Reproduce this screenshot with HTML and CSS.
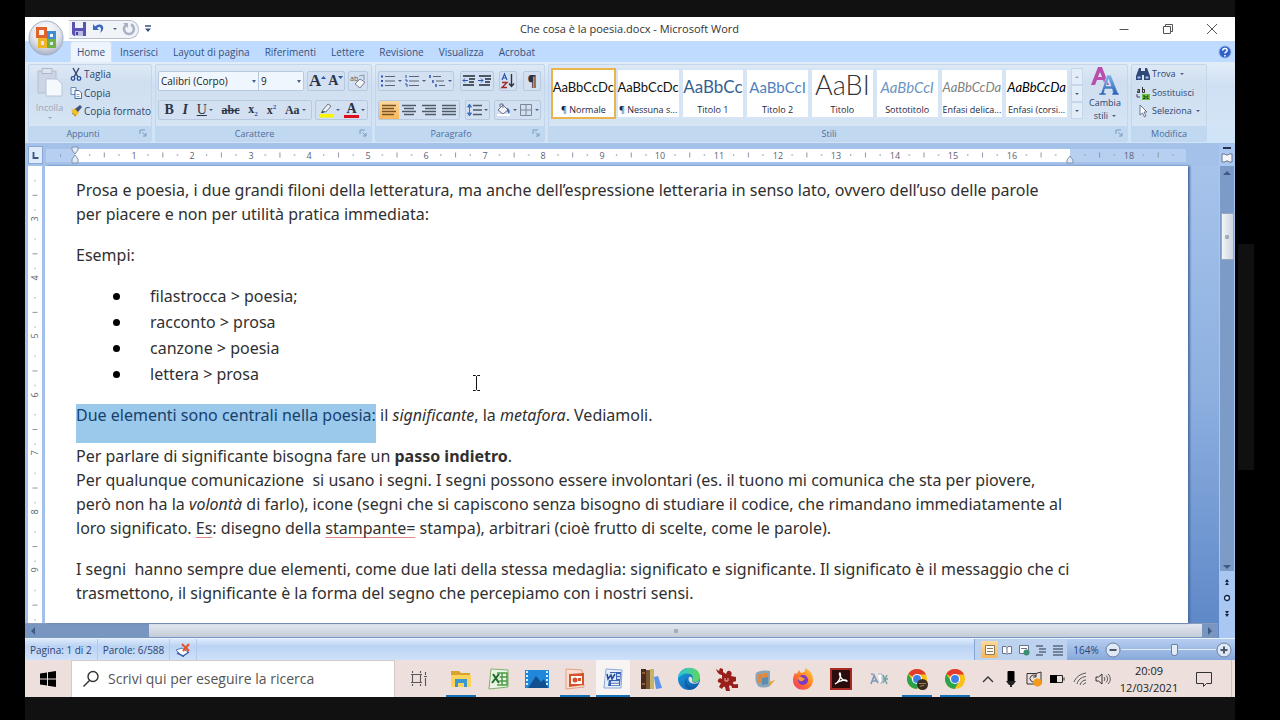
FILE: index.html
```html
<!DOCTYPE html>
<html lang="it">
<head>
<meta charset="utf-8">
<title>Che cosa è la poesia.docx - Microsoft Word</title>
<link rel="stylesheet" href="styles.css">
</head>
<body>
<svg class="defs" aria-hidden="true">
  <defs>
    <linearGradient id="gEdge" x1="0" y1="0" x2="1" y2="1"><stop offset="0" stop-color="#1b9de2"/><stop offset="1" stop-color="#0c59a4"/></linearGradient>
    <linearGradient id="gEdge2" x1="0" y1="0" x2="1" y2="0"><stop offset="0" stop-color="#2fc2df"/><stop offset="1" stop-color="#5fd75a"/></linearGradient>
    <linearGradient id="gFox" x1="0" y1="1" x2="1" y2="0"><stop offset="0" stop-color="#f0306a"/><stop offset=".5" stop-color="#ff7a26"/><stop offset="1" stop-color="#ffd43a"/></linearGradient>
    <linearGradient id="gA" x1="0" y1="0" x2="0" y2="1"><stop offset="0" stop-color="#7fb2e8"/><stop offset="1" stop-color="#2c62b4"/></linearGradient>
    <radialGradient id="gOrb" cx=".5" cy=".3" r=".7"><stop offset="0" stop-color="#fff"/><stop offset=".6" stop-color="#e0e4ec"/><stop offset="1" stop-color="#a9b2c4"/></radialGradient>
    <pattern id="ticks" width="58.55" height="12" patternUnits="userSpaceOnUse"><path d="M14.6 5v2M43.9 5v2" stroke="#9aa3b0"/><path d="M29.3 3.500v5" stroke="#8a93a2"/></pattern>
    <pattern id="vticks" width="14" height="58.55" patternUnits="userSpaceOnUse"><path d="M6 14.600h2M6 43.900h2" stroke="#b4bac4"/><path d="M4.500 29.300h5" stroke="#8a93a2"/></pattern>
    <symbol id="launch" viewBox="0 0 8 8"><path d="M1 5V1h5M3.500 3.500l3 3M7 4v3H4" fill="none" stroke="#7d96ba"/></symbol>
    <symbol id="chrome" viewBox="0 0 24 24"><circle cx="12" cy="12" r="11" fill="#fbc116"/><path d="M12 12 2.500 6.500A11 11 0 0 1 21.500 6.500L22 7H12z" fill="#e33b2e"/><path d="M2.500 6.500A11 11 0 0 0 11.500 23l5-8.500L12 12 7.500 14.500z" fill="#2ba24c"/><circle cx="12" cy="12" r="5.500" fill="#fff"/><circle cx="12" cy="12" r="4.300" fill="#3f7fe8"/></symbol>
  </defs>
</svg>
<div class="screen">
<main class="window">
  <header class="titlebar">
    <div class="quick">
      <button aria-label="Salva"><svg width="16" height="16" viewBox="0 0 16 16"><path d="M1 1h14v14H3l-2-2z" fill="#5a51b5"/><path d="M4 1h8v6H4z" fill="#eef1fb"/><path d="M4 10h8v5H4z" fill="#b9bce4"/><path d="M5 11h2v3H5z" fill="#453c98"/></svg></button>
      <button aria-label="Annulla"><svg width="14" height="14" viewBox="0 0 14 14"><path d="M1 2v6h6L5 6c3-2.500 5.500.5 3 5 5-3 4-9-1-8.500C5.500 2.600 4 3.500 3 4.500z" fill="#3c68c0"/></svg></button>
      <i class="caret"></i>
      <button aria-label="Ripeti"><svg width="14" height="14" viewBox="0 0 14 14"><path d="M9 2.500A5 5 0 1 1 4 3" fill="none" stroke="#a8b2c4" stroke-width="2.500"/><path d="M1 1h5v5z" fill="#a8b2c4"/></svg></button>
    </div>
    <button class="more" aria-label="Personalizza barra"><svg width="8" height="8" viewBox="0 0 8 8"><path d="M1 1h6" stroke="#354f80" stroke-width="1.500"/><path d="M1 3.500h6L4 7z" fill="#354f80"/></svg></button>
    <h1>Che cosa è la poesia.docx - Microsoft Word</h1>
    <div class="winbtns">
      <button aria-label="Riduci"><svg width="12" height="12" viewBox="0 0 12 12"><path d="M1.500 6.500h9" stroke="#555"/></svg></button>
      <button aria-label="Ripristina"><svg width="12" height="12" viewBox="0 0 12 12"><path d="M1.500 3.500h7v7h-7zM3.500 3.500v-2h7v7h-2" fill="none" stroke="#555"/></svg></button>
      <button aria-label="Chiudi"><svg width="12" height="12" viewBox="0 0 12 12"><path d="M1 1l10 10M11 1 1 11" stroke="#555"/></svg></button>
    </div>
  </header>
  <button class="orb" aria-label="Pulsante Office"><svg width="36" height="36" viewBox="0 0 36 36"><circle cx="18" cy="18" r="17" fill="url(#gOrb)" stroke="#a3aec4"/><g fill="none" stroke-width="3"><path d="M9.500 8.500h8v8h-8z" stroke="#e2622e"/><path d="M20.500 12.500h6v6h-6z" stroke="#3c8fd2"/><path d="M11.500 19.500h6v7h-6z" stroke="#f0b429"/><path d="M20.500 20.500h6v6h-6z" stroke="#6eb246"/></g></svg></button>
  <nav class="tabs">
    <button class="on">Home</button><button>Inserisci</button><button>Layout di pagina</button><button>Riferimenti</button><button>Lettere</button><button>Revisione</button><button>Visualizza</button><button>Acrobat</button>
    <button class="help" aria-label="Guida"><svg width="14" height="14" viewBox="0 0 14 14"><circle cx="7" cy="7" r="6" fill="#2f62c4" stroke="#8fb0e6"/><path d="M4.500 5.500C5 2.500 10 3 9 6c-.5 1-2 1-2 2.500M7 10v1.500" fill="none" stroke="#fff" stroke-width="1.600"/></svg></button>
  </nav>

  <section class="ribbon">
    <div class="group appunti">
      <div class="body">
        <button class="paste"><svg width="28" height="32" viewBox="0 0 28 32"><path d="M2 4h18v22H2z" fill="#cbd5e4" stroke="#b3c0d4"/><path d="M6 1.500h10v5H6z" fill="#dde4ee" stroke="#aab8cc"/><path d="M10 12h11l5 5v12H10z" fill="#f5f8fc" stroke="#b7c4d8"/></svg><span>Incolla</span><i class="caret pale"></i></button>
        <div class="stack">
          <button><svg width="12" height="14" viewBox="0 0 12 14"><path d="M3 1l5 9M9 1 4 10" stroke="#3b4a72" stroke-width="1.500"/><circle cx="3" cy="11.500" r="1.800" fill="none" stroke="#2d4fa0" stroke-width="1.300"/><circle cx="9" cy="11.500" r="1.800" fill="none" stroke="#2d4fa0" stroke-width="1.300"/></svg>Taglia</button>
          <button><svg width="12" height="14" viewBox="0 0 12 14"><path d="M1 1.500h5v7H1z" fill="#eef4fc" stroke="#6d8cbd"/><path d="M5 4.500h4l2.500 2.500v5.500H5z" fill="#fff" stroke="#3f68a8"/><path d="M6.500 8.500h3M6.500 10.500h3" stroke="#7fa0d0"/></svg>Copia</button>
          <button><svg width="12" height="14" viewBox="0 0 12 14"><path d="M1 6l5-2 3 5-4 4z" fill="#f0c22e"/><path d="M5 5l5-4 2 2-4 5z" fill="#46517c"/><path d="M2 9l4 3" stroke="#a8791a"/></svg>Copia formato</button>
        </div>
      </div>
      <footer>Appunti<svg width="8" height="8"><use href="#launch"/></svg></footer>
    </div>

    <div class="group carattere">
      <div class="body rows">
        <div class="row">
          <div class="joined"><select class="font" aria-label="Tipo di carattere"><option>Calibri (Corpo)</option></select><select class="size" aria-label="Dimensione carattere"><option>9</option></select></div>
          <div class="box grow"><button class="serif big" aria-label="Aumenta carattere">A<svg width="5" height="10" viewBox="0 0 5 10"><path d="M0 3h5L2.500 0z" fill="#2d56ae"/></svg></button><button class="serif" aria-label="Riduci carattere">A<svg width="5" height="10" viewBox="0 0 5 10"><path d="M0 0h5L2.500 3z" fill="#2d56ae"/></svg></button></div>
          <div class="box"><button aria-label="Cancella formattazione"><svg width="16" height="16" viewBox="0 0 16 16"><text x="0" y="8" font-size="7" fill="#555">ab</text><path d="M5 11l5-5 5 3-5 6z" fill="#f5f5f8" stroke="#777f92"/><path d="M9 3l5-1v5" fill="none" stroke="#8a93a6"/></svg></button></div>
        </div>
        <div class="row">
          <div class="box fmt">
            <button class="serif" aria-label="Grassetto">B</button>
            <button class="serif" aria-label="Corsivo"><em>I</em></button>
            <button class="serif thin" aria-label="Sottolineato"><ins>U</ins><i class="caret"></i></button>
            <button class="serif small" aria-label="Barrato"><s>abc</s></button>
            <button class="serif small" aria-label="Pedice"><span>x<sub>2</sub></span></button>
            <button class="serif small" aria-label="Apice"><span>x<sup>2</sup></span></button>
            <button class="serif small" aria-label="Maiuscole/minuscole">Aa<i class="caret"></i></button>
          </div>
          <div class="box colors">
            <button aria-label="Evidenziatore"><svg width="16" height="16" viewBox="0 0 16 16"><path d="M4 9l6-7 3 2-5 6z" fill="#eef0f2" stroke="#6f7887"/><path d="M3 11l1-2 3 1-2 1z" fill="#444"/><path d="M1 12h14v3.500H1z" fill="#fbf400"/></svg><i class="caret"></i></button>
            <button class="fc" aria-label="Colore carattere"><span>A</span><i class="caret"></i></button>
          </div>
        </div>
      </div>
      <footer>Carattere<svg width="8" height="8"><use href="#launch"/></svg></footer>
    </div>

    <div class="group paragrafo">
      <div class="body rows">
        <div class="row">
          <div class="box">
            <button aria-label="Elenco puntato"><svg width="16" height="14" viewBox="0 0 16 14"><path d="M5 2.500h10M5 7h10M5 11.500h10" stroke="#5b6675"/><path d="M1 2.500h2M1 7h2M1 11.500h2" stroke="#2d56ae" stroke-width="2"/></svg><i class="caret"></i></button>
            <button aria-label="Elenco numerato"><svg width="16" height="14" viewBox="0 0 16 14"><path d="M5 2.500h10M5 7h10M5 11.500h10" stroke="#5b6675"/><path d="M2 1v3M1 6h2v2M1 10h2v3" stroke="#2d56ae" fill="none"/></svg><i class="caret"></i></button>
            <button aria-label="Elenco a più livelli"><svg width="18" height="14" viewBox="0 0 18 14"><path d="M5 2.500h8M8 7h8M11 11.500h6" stroke="#5b6675"/><path d="M2 1v3M5 6v3M8 10v3" stroke="#2d56ae" stroke-width="1.500"/></svg><i class="caret"></i></button>
          </div>
          <div class="box">
            <button aria-label="Riduci rientro"><svg width="14" height="14" viewBox="0 0 14 14"><path d="M1 2h12M7 5h6M7 8h5M1 11h11" stroke="#222b3a" stroke-width="1.600"/><path d="M6 6.500H1M3 4.500l-2 2 2 2" stroke="#2d56ae" fill="none"/></svg></button>
            <button aria-label="Aumenta rientro"><svg width="14" height="14" viewBox="0 0 14 14"><path d="M1 2h12M7 5h6M7 8h5M1 11h11" stroke="#222b3a" stroke-width="1.600"/><path d="M0 6.500h5M3 4.500l2 2-2 2" stroke="#2d56ae" fill="none"/></svg></button>
          </div>
          <div class="box"><button aria-label="Ordina"><svg width="14" height="16" viewBox="0 0 14 16"><path d="M1 7l2.500-6L6 7M2 5h3" fill="none" stroke="#2d56ae" stroke-width="1.200"/><path d="M1 9.500h5l-5 5h5" fill="none" stroke="#a02828" stroke-width="1.400"/><path d="M10.500 1v12M8 10.500l2.500 3 2.500-3" fill="none" stroke="#333" stroke-width="1.400"/></svg></button></div>
          <div class="box"><button class="pilcrow" aria-label="Mostra tutto">¶</button></div>
        </div>
        <div class="row">
          <div class="box">
            <button class="lit" aria-label="Allinea a sinistra"><svg width="14" height="12" viewBox="0 0 14 12"><path d="M0 1.500h14M0 4.500h12M0 7.500h14M0 10.500h12" stroke="#7a5222" stroke-width="1.500"/></svg></button>
            <button class="al" aria-label="Centra"><svg width="14" height="12" viewBox="0 0 14 12"><path d="M0 1.500h14M2 4.500h10M0 7.500h14M2 10.500h10" stroke="#4f5a68" stroke-width="1.500"/></svg></button>
            <button class="al" aria-label="Allinea a destra"><svg width="14" height="12" viewBox="0 0 14 12"><path d="M0 1.500h14M3 4.500h11M0 7.500h14M3 10.500h11" stroke="#4f5a68" stroke-width="1.500"/></svg></button>
            <button class="al" aria-label="Giustifica"><svg width="14" height="12" viewBox="0 0 14 12"><path d="M0 1.500h14M0 4.500h14M0 7.500h14M0 10.500h14" stroke="#4f5a68" stroke-width="1.500"/></svg></button>
          </div>
          <div class="box"><button aria-label="Interlinea"><svg width="15" height="14" viewBox="0 0 15 14"><path d="M6 2.500h9M6 7h9M6 11.500h9" stroke="#4f5a68" stroke-width="1.300"/><path d="M2.500 2v10M.5 4l2-3 2 3zM.5 10l2 3 2-3z" stroke="#3f72bd" fill="#3f72bd"/></svg><i class="caret"></i></button></div>
          <div class="box fills">
            <button aria-label="Sfondo"><svg width="15" height="14" viewBox="0 0 15 14"><path d="M2 7l5-5 5 5-5 4z" fill="#f1f3f7" stroke="#6a7588"/><path d="M4 4V1h3v4" fill="none" stroke="#6a7588"/><path d="M11 5c3 1 3 4 2 6l-2-3z" fill="#3768b8"/><path d="M1 12h13" stroke="#fff" stroke-width="2"/></svg><i class="caret"></i></button>
            <button aria-label="Bordi"><svg width="14" height="14" viewBox="0 0 14 14"><path d="M1.500 1.500h11v11h-11zM7 1.500v11M1.500 7h11" fill="none" stroke="#7a8699" /></svg><i class="caret"></i></button>
          </div>
        </div>
      </div>
      <footer>Paragrafo<svg width="8" height="8"><use href="#launch"/></svg></footer>
    </div>

    <div class="group stili">
      <div class="body">
        <div class="gallery">
          <button class="sel"><span class="s">AaBbCcDc</span><span>¶ Normale</span></button>
          <button><span class="s">AaBbCcDc</span><span>¶ Nessuna s...</span></button>
          <button><span class="s h">AaBbCc</span><span>Titolo 1</span></button>
          <button><span class="s h2">AaBbCcI</span><span>Titolo 2</span></button>
          <button><span class="s t">AaBI</span><span>Titolo</span></button>
          <button><span class="s sub">AaBbCcI</span><span>Sottotitolo</span></button>
          <button><span class="s em">AaBbCcDa</span><span>Enfasi delica...</span></button>
          <button><span class="s emb">AaBbCcDa</span><span>Enfasi (corsi...</span></button>
        </div>
        <div class="galscroll"><button aria-label="Su"><i class="caret up"></i></button><button aria-label="Giù"><i class="caret"></i></button><button aria-label="Altro"><i class="caret"></i></button></div>
        <button class="change"><svg width="30" height="30" viewBox="0 0 30 30"><path d="M1 19 8 1h4l7 18h-4l-2-5H7l-2 5zM8 11h4l-2-5z" fill="#b84fae"/><path d="M9 27h2l6-18h4l7 18h1v2h-7v-2h1l-1-4h-7l-1 4h2v2H9zM16 20h5l-2.500-7z" fill="url(#gA)" stroke="#dce9f8" stroke-width=".5"/></svg><span>Cambia</span><span>stili <i class="caret"></i></span></button>
      </div>
      <footer>Stili<svg width="8" height="8"><use href="#launch"/></svg></footer>
    </div>

    <div class="group modifica">
      <div class="body"><div class="stack">
        <button><svg width="14" height="14" viewBox="0 0 14 14"><path d="M3 1h2v3h4V1h2l3 8v4H8V8H6v5H0V9z" fill="#2f4878"/><path d="M1.500 9.500h3v2h-3zM9.500 9.500h3v2h-3z" fill="#a9c4ea"/></svg>Trova <i class="caret"></i></button>
        <button><svg width="14" height="14" viewBox="0 0 14 14"><path d="M1.500 3.500h2v3h-2v-1.500h2M6.500 1v5.500h2v-3h-2" fill="none" stroke="#333"/><path d="M6 8h8v6H6z" fill="#6fc043"/><path d="M7 10h2v2.500H7M12.500 10h-1.500v2.500h1.500" fill="none" stroke="#163a12"/><path d="M1 8v3h3" fill="none" stroke="#446"/></svg>Sostituisci</button>
        <button><svg width="14" height="14" viewBox="0 0 14 14"><path d="M4 1v10l2.500-2 2 4 1.500-1-2-4h3z" fill="#fff" stroke="#6a7688"/></svg>Seleziona <i class="caret"></i></button>
      </div></div>
      <footer>Modifica</footer>
    </div>
  </section>

  <section class="work">
    <div class="left">
      <div class="hruler">
        <div class="corner"><svg width="13" height="13" viewBox="0 0 13 13"><path d="M4.500 3v6h5" fill="none" stroke="#3a567f" stroke-width="1.800"/></svg></div>
        <svg class="hscale" width="1140" height="18">
          <rect x="0" y="3" width="1140" height="13" fill="#b7cff0"/><rect x="29" y="3" width="995" height="13" fill="#fff"/>
          <svg x="29" y="3" width="1100" height="13"><rect width="1100" height="12" fill="url(#ticks)"/></svg>
          <path d="M14.500 8v3" stroke="#8da6c8"/>
          <g class="num"><text x="88" y="13">1</text><text x="146" y="13">2</text><text x="205" y="13">3</text><text x="263" y="13">4</text><text x="322" y="13">5</text><text x="380" y="13">6</text><text x="439" y="13">7</text><text x="497" y="13">8</text><text x="556" y="13">9</text><text x="614" y="13">10</text><text x="673" y="13">11</text><text x="732" y="13">12</text><text x="790" y="13">13</text><text x="849" y="13">14</text><text x="907" y="13">15</text><text x="966" y="13">16</text><text x="1083" y="13">18</text></g>
          <path d="M26 1h6v3l-3 4-3-4zM29 9l3 4v4h-6v-4zM1024 10l3 4v3h-6v-3z" fill="#e4ebf5" stroke="#7f93b2"/>
        </svg>
      </div>
      <div class="docrow">
        <div class="vruler"><svg width="14" height="457"><rect y="-6" width="14" height="470" fill="url(#vticks)"/><g class="num"><text transform="translate(10 53)rotate(-90)">3</text><text transform="translate(10 112)rotate(-90)">4</text><text transform="translate(10 170)rotate(-90)">5</text><text transform="translate(10 229)rotate(-90)">6</text><text transform="translate(10 287)rotate(-90)">7</text><text transform="translate(10 346)rotate(-90)">8</text><text transform="translate(10 404)rotate(-90)">9</text></g></svg></div>
        <article class="page">
          <p>Prosa e poesia, i due grandi filoni della letteratura, ma anche dell’espressione letteraria in senso lato, ovvero dell’uso delle parole<br>per piacere e non per utilità pratica immediata:</p>
          <p>Esempi:</p>
          <ul><li>filastrocca &gt; poesia;</li><li>racconto &gt; prosa</li><li>canzone &gt; poesia</li><li>lettera &gt; prosa</li></ul>
          <p><mark>Due elementi sono centrali nella poesia:</mark> il <em>significante</em>, la <em>metafora</em>. Vediamoli.</p>
          <p>Per parlare di significante bisogna fare un <strong>passo indietro</strong>.<br>Per qualunque comunicazione&nbsp; si usano i segni. I segni possono essere involontari (es. il tuono mi comunica che sta per piovere,<br>però non ha la <em>volontà</em> di farlo), icone (segni che si capiscono senza bisogno di studiare il codice, che rimandano immediatamente al<br>loro significato. <u>Es</u>: disegno della <u>stampante=</u> stampa), arbitrari (cioè frutto di scelte, come le parole).</p>
          <p>I segni&nbsp; hanno sempre due elementi, come due lati della stessa medaglia: significato e significante. Il significato è il messaggio che ci<br>trasmettono, il significante è la forma del segno che percepiamo con i nostri sensi.</p>
          <svg class="ibeam" width="9" height="16" viewBox="0 0 9 16"><path d="M1 .5h2.500l1 1 1-1H8M4.500 1.500v13M1 15.500h2.500l1-1 1 1H8" fill="none" stroke="#111"/></svg>
        </article>
      </div>
      <div class="hscroll"><button aria-label="Scorri a sinistra"><i class="tri l"></i></button><div class="track"><div class="thumb"><i></i></div></div><button aria-label="Scorri a destra"><i class="tri r"></i></button></div>
    </div>
    <div class="vscroll">
      <i class="split"></i>
      <button class="rulerbtn" aria-label="Righello"><svg width="12" height="12" viewBox="0 0 12 12"><path d="M1 2h3l1 1h2l1-1h3v8H8L7 9H5l-1 1H1z" fill="#f5f7fa" stroke="#6d7889"/></svg></button>
      <div class="vtrack"><i class="tri u"></i><div class="vthumb"><i></i></div><i class="tri d"></i></div>
      <div class="browse">
        <button aria-label="Pagina precedente"><svg width="8" height="8" viewBox="0 0 8 8"><path d="M2 4l2-3 2 3zM2 7l2-3 2 3z" fill="#12244a"/></svg></button>
        <button aria-label="Seleziona oggetto"><svg width="8" height="8" viewBox="0 0 8 8"><circle cx="4" cy="4" r="2.500" fill="#dce6f5" stroke="#12244a" stroke-width="1.300"/></svg></button>
        <button aria-label="Pagina successiva"><svg width="8" height="8" viewBox="0 0 8 8"><path d="M2 1l2 3 2-3zM2 4l2 3 2-3z" fill="#12244a"/></svg></button>
      </div>
    </div>
  </section>

  <footer class="status">
    <span>Pagina: 1 di 2</span><span>Parole: 6/588</span>
    <span><svg width="16" height="14" viewBox="0 0 16 14"><path d="M1 7l6-2 6 4-5 5z" fill="#fff" stroke="#5577b5"/><path d="M2 10l6 3 6-4" fill="none" stroke="#3f63ab" stroke-width="1.500"/><path d="M7 1l7 7M14 1 8 8" stroke="#e2542c" stroke-width="2"/></svg></span>
    <div class="views">
      <button class="lit" aria-label="Layout di stampa"><svg width="12" height="12" viewBox="0 0 12 12"><path d="M1.500 1.500h9v9h-9zM3 4.500h6M3 7.500h6" fill="#fff" stroke="#8b7a50"/></svg></button>
      <button aria-label="Lettura"><svg width="12" height="12" viewBox="0 0 12 12"><path d="M1.500 2.500H5l1 1 1-1h3.500v7H7l-1 1-1-1H1.500zM6 3v7" fill="#fff" stroke="#66758d"/></svg></button>
      <button aria-label="Layout Web"><svg width="12" height="12" viewBox="0 0 12 12"><path d="M1.500 1.500h9v8h-9zM3 4.500h6" fill="#fff" stroke="#66758d"/><circle cx="8.500" cy="8.500" r="3" fill="#3c8e73"/></svg></button>
      <button aria-label="Struttura"><svg width="12" height="12" viewBox="0 0 12 12"><path d="M1 2h7M4 5h7M4 8h7M1 11h7" stroke="#5a6a80" stroke-width="1.500"/></svg></button>
      <button aria-label="Bozza"><svg width="12" height="12" viewBox="0 0 12 12"><path d="M1 2h10M1 5h10M1 8h10M1 11h10" stroke="#5a6a80" stroke-width="1.500"/></svg></button>
    </div>
    <div class="zoom">
      <button>164%</button>
      <button aria-label="Zoom indietro"><svg width="16" height="16" viewBox="0 0 16 16"><circle cx="8" cy="8" r="7" fill="#dfe8f5" stroke="#6b7fa2"/><path d="M4.500 8h7" stroke="#4b5668" stroke-width="2"/></svg></button>
      <input type="range" min="0" max="100" value="57" aria-label="Zoom">
      <button aria-label="Zoom avanti"><svg width="16" height="16" viewBox="0 0 16 16"><circle cx="8" cy="8" r="7" fill="#dfe8f5" stroke="#6b7fa2"/><path d="M4.500 8h7M8 4.500v7" stroke="#4b5668" stroke-width="2"/></svg></button>
    </div>
  </footer>

  <footer class="taskbar">
    <button class="start" aria-label="Start"><svg width="16" height="16" viewBox="0 0 16 16"><path d="M0 2.500 7 1.500v6H0zM8 1.300 16 0v7.500H8zM0 8.500h7v6l-7-1zM8 8.500h8V16l-8-1.300z" fill="#000"/></svg></button>
    <label class="search"><svg width="18" height="18" viewBox="0 0 18 18"><circle cx="11" cy="6.500" r="5" fill="none" stroke="#333" stroke-width="1.400"/><path d="M7.500 10.500 1.500 16.500" stroke="#333" stroke-width="1.400"/></svg><input type="text" placeholder="Scrivi qui per eseguire la ricerca" aria-label="Ricerca"></label>
    <div class="apps">
      <button class="tv" aria-label="Visualizzazione attività"><svg width="18" height="16" viewBox="0 0 18 16"><path d="M2.500 3.500h8v8h-8zM2.500 0v2M10.500 0v2M2.500 13v2M10.500 13v2M1 3.500h11M1 11.500h11M15.500 1v3M15.500 7v8M14 5.500h3" fill="none" stroke="#5b5658" stroke-width="1.100"/></svg></button>
      <button class="run" aria-label="Esplora file"><svg width="22" height="20" viewBox="0 0 22 20"><path d="M1 2h8l2 2h9v4H1z" fill="#d8a32c"/><path d="M1 6h20v12H1z" fill="#fbd45c"/><path d="M5 10h12v8h-3v-4H8v4H5z" fill="#3c96cf"/></svg></button>
      <button aria-label="Excel"><svg width="22" height="22" viewBox="0 0 22 22"><path d="M3 1l17 1v17L1 21z" fill="#eaf5e6" stroke="#7fb26c"/><path d="M9 5h10v12H9M9 9h10M9 13h10M14 5v12" fill="none" stroke="#4c9a46" stroke-width="1.500"/><path d="M4 6h8l-1 9H3z" fill="#dff0d8"/><path d="M5 6l6 9M11 6l-7 9" stroke="#226b2b" stroke-width="2"/></svg></button>
      <button aria-label="Film e TV"><svg width="24" height="18" viewBox="0 0 24 18"><path d="M0 0h24v18H0z" fill="#2088da"/><path d="M3 18l8-12 5 6 3-3 4 9z" fill="#124f8f"/><path d="M2 1v16M22 1v16" stroke="#d8eefc" stroke-width="2" stroke-dasharray="2 2"/></svg></button>
      <button class="run" aria-label="PowerPoint"><svg width="22" height="22" viewBox="0 0 22 22"><path d="M2 1l16 1 2 17-18 2z" fill="#f8dfd2" stroke="#e3a084"/><path d="M5 6l15-1v12l-15 2z" fill="#d6532a"/><path d="M7 8h11v8H7z" fill="#fff"/><circle cx="11" cy="12" r="2.500" fill="#d6532a"/><path d="M14 10h3v3h-3z" fill="#d6532a"/></svg></button>
      <button class="run active" aria-label="Word"><svg width="22" height="22" viewBox="0 0 22 22"><path d="M4 1l16 1-1 18H2z" fill="#e8effa" stroke="#8ca7d6"/><path d="M8 4h11l-1 14H6z" fill="#3c64b4"/><path d="M15 7h3M15 10h3M9 14h8M9 16.500h8" stroke="#fff" stroke-width="1.300"/><path d="M4 5h10v7H3z" fill="#dde8f8"/><path d="M5 6l1 5 3-4 1 4 3-5" fill="none" stroke="#24489a" stroke-width="1.500"/></svg></button>
      <button aria-label="Libreria"><svg width="22" height="22" viewBox="0 0 22 22"><path d="M1 1h5v20H1z" fill="#4b2c1a"/><path d="M6 2h4v19H6z" fill="#765636"/><path d="M10 1h4v20h-4z" fill="#c4b46b"/><path d="M14 9l4-1 4 12-6 1z" fill="#5b93e8"/><path d="M2 5h3M2 16h3" stroke="#c99a50"/></svg></button>
      <button aria-label="Edge"><svg width="24" height="24" viewBox="0 0 24 24"><circle cx="12" cy="12" r="11" fill="url(#gEdge)"/><path d="M1 11C2-3 24-2 23 11c-.5 5-8 5-8 2C19 7 8 3 1 11z" fill="url(#gEdge2)"/><path d="M10 11c-3 7 5 12 11 7-2 2-3 3-5 4C8 24 6 15 10 11z" fill="#125aa6"/><path d="M12 10c-2 5 3 8 9 6l2-3c-2 3-8 4-8 0 1-2-1-4-3-3z" fill="#e9dbd9"/></svg></button>
      <button aria-label="Puzzle"><svg width="24" height="24" viewBox="0 0 24 24"><path d="M1 2l3 2 1-3 3 1 0 3 3 2c1-3 2-4 4-3s2 3 1 5l5 1v4c-1 1-3 0-3 2s3 1 5 1v4l-6 0c0-2-1-3-3-2l1 5h-4l-1-4c-2-1-2 1-3 2l-3-2 2-4c-2 0-4-1-3-3s3-2 4-1V8C4 8 2 5 1 2z" fill="#981f1b"/><path d="M10 11v3h3v-3" fill="none" stroke="#eeb4a8"/></svg></button>
      <button aria-label="Disegno"><svg width="22" height="20" viewBox="0 0 22 20"><path d="M2 4c3-3 11-3 14-2v15c-4 2-9 2-12 0C1 13 1 8 2 4z" fill="#8ba6b8"/><path d="M4 5h5v9H4z" fill="#d98a46"/><path d="M10 4h4v5h-4z" fill="#e08a3c"/><path d="M8 9l6-1v7l-6 1z" fill="#5b8db3"/><path d="M15 13l6-2-5 6z" fill="#e8a735"/></svg></button>
      <button aria-label="Firefox"><svg width="22" height="22" viewBox="0 0 22 22"><path d="M3 5l2 1 2-4 2 3c3-1 5-1 4-5 6 3 8 7 8 12 0 13-20 13-20 0 0-3 1-5 2-7z" fill="url(#gFox)"/><circle cx="11" cy="12" r="5" fill="#7a3bc8"/><path d="M6 9c4-2 4 2 7 1-2 5-7 4-7-1z" fill="#ff9430"/></svg></button>
      <button aria-label="Acrobat Reader"><svg width="22" height="22" viewBox="0 0 22 22"><path d="M1 1h20v20H1z" fill="#2b0c0c" stroke="#a82a24" stroke-width="2"/><path d="M5 16c3-1 7-7 5-11-2 0 1 8 7 8 0-2-7-1-12 3z" fill="none" stroke="#fff" stroke-width="1.300"/></svg></button>
      <button aria-label="Traduttore"><svg width="20" height="14" viewBox="0 0 20 14"><path d="M2 12 5 4l4 7M3 9h5M2 2c2 0 3 0 4 3" fill="none" stroke="#7d97bd" stroke-width="1.600"/><path d="M9 2h4v9h-2" fill="#fff" stroke="#9fb3c9"/><path d="M14 3l4 9M18 3l-4 8M14 7h5" stroke="#6ea2a4" stroke-width="1.500"/></svg></button>
      <button class="run" aria-label="Chrome profilo"><svg width="22" height="22" viewBox="0 0 24 24"><use href="#chrome"/><circle cx="18" cy="18" r="6" fill="#3a2a20"/><path d="M14 17h8M15 20l5-1" stroke="#a98a58"/></svg></button>
      <button class="run" aria-label="Chrome"><svg width="22" height="22" viewBox="0 0 24 24"><use href="#chrome"/></svg></button>
    </div>
    <div class="tray">
      <button aria-label="Icone nascoste"><svg width="12" height="12" viewBox="0 0 12 12"><path d="M1 9l5-5 5 5" fill="none" stroke="#333" stroke-width="1.300"/></svg></button>
      <button aria-label="Microfono"><svg width="10" height="16" viewBox="0 0 10 16"><rect x="1.500" y="0" width="7" height="12" rx="1" fill="#000"/><path d="M0 10h10l-3 4H3zM4 13h2v3H4z" fill="#222"/></svg></button>
      <button aria-label="Aggiornamenti"><svg width="16" height="16" viewBox="0 0 16 16"><path d="M1 2.500h9l5-1.500v12H1z" fill="none" stroke="#333"/><path d="M10 5a3.500 3.500 0 1 0 0 5M10 3v3H7" fill="none" stroke="#333"/><circle cx="11.500" cy="11.500" r="4" fill="#f39a1d"/></svg></button>
      <button aria-label="Batteria"><svg width="16" height="10" viewBox="0 0 16 10"><path d="M1.500 1.500h12v7h-12zM15 3.500v3" fill="none" stroke="#222"/><path d="M1 1h7v8H1z" fill="#000"/></svg></button>
      <button aria-label="Rete"><svg width="14" height="14" viewBox="0 0 14 14"><path d="M1 10C3 5 7 2 13 1M4 12C5 8 8 5 13 4.500M7 13c1-3 3-5 6-5M10 13c.5-1 1.500-2 3-2" fill="none" stroke="#555"/></svg></button>
      <button aria-label="Volume"><svg width="15" height="14" viewBox="0 0 15 14"><path d="M1 5h2.500L7 2v10L3.500 9H1z" fill="none" stroke="#333"/><path d="M9 5c1 1 1 3 0 4M11 3.500c2 2 2 5 0 7M13 2c3 3 3 7 0 10" fill="none" stroke="#555"/></svg></button>
    </div>
    <div class="clock"><time>20:09</time><time>12/03/2021</time></div>
    <button class="note" aria-label="Notifiche"><svg width="18" height="18" viewBox="0 0 18 18"><path d="M1.500 2.500h15v11h-5l-3 3v-3h-7z" fill="none" stroke="#333"/></svg></button>
  </footer>
</main>
<aside class="gutter"></aside>
</div>
</body>
</html>
```

FILE: styles.css
```css
* { box-sizing: border-box; }
body { margin: 0; background: #000; font: 11px/14px "Open Sans", "Noto Sans", sans-serif; color: #2c4470; }
button { border: 0; padding: 0; margin: 0; background: none; font: inherit; color: inherit; white-space: nowrap; display: flex; align-items: center; justify-content: center; }
svg { display: block; flex: none; overflow: visible; }
h1, p, ul { margin: 0; padding: 0; font-weight: inherit; }
.defs { position: absolute; width: 0; height: 0; }

.screen { display: flex; min-height: 100vh; padding-left: 25px; }
.window { flex: 1; min-width: 0; display: flex; flex-direction: column; position: relative; border-top: 17px solid #111; border-bottom: 23px solid #111; background: #bfdbff; }
.gutter { width: 45px; flex: none; padding: 244px 0 0 3px; }
.gutter::before { content: ""; display: block; width: 16px; height: 226px; background: #101010; }

.caret { display: inline-block; border: 2px solid transparent; border-top-color: #4a5f87; border-bottom: 0; margin-left: 2px; vertical-align: middle; flex: none; }
.caret.up { border-top: 0; border-bottom: 2px solid #97a7c2; }
.caret.pale { border-top-color: #9aa9c2; }

.titlebar { display: grid; grid-template-columns: auto auto 1fr auto; align-items: center; height: 24px; background: #fff; padding: 0 1px 0 44px; color: #333; }
.titlebar h1 { font-size: 11px; text-align: center; white-space: nowrap; }
.quick { display: flex; align-items: center; gap: 5px; height: 19px; width: 70px; padding-left: 2px; border: 1px solid #b5bccb; border-left: 0; border-radius: 0 10px 10px 0; background: #f0f3f8; }
.more { width: 18px; }
.winbtns { display: flex; }
.winbtns button { width: 44px; height: 24px; }
.orb { position: absolute; left: 3px; top: 3px; z-index: 2; }

.tabs { display: flex; gap: 1px; height: 21px; background: #bfdbff; padding-left: 45px; color: #36517f; font-size: 10px; }
.tabs button { padding: 0 7px; }
.tabs .on { background: #edf4fc; border: 1px solid #cfe0f5; border-bottom: 0; border-radius: 3px 3px 0 0; width: 42px; }
.tabs .help { margin-left: auto; padding: 0 3px; }

.ribbon { display: flex; gap: 3px; height: 82px; padding: 2px 28px 1px 3px; background: linear-gradient(#e3edf8, #cfe0f4 30%, #d3e4f6 75%, #cfe4f8); border-bottom: 1px solid #a5c3e6; }
.group { display: flex; flex-direction: column; border: 1px solid #c3d6ec; border-radius: 2px; background: linear-gradient(#dde8f4, #cfdff0 25%, #d8e6f5); min-width: 0; }
.group footer { display: flex; align-items: center; justify-content: center; height: 15px; background: #c1d9f0; color: #4d6c9c; position: relative; font-size: 9px; }
.group footer svg { position: absolute; right: 4px; top: 3px; }
.body { flex: 1; display: flex; min-height: 0; }
.appunti { width: 124px; }
.appunti footer { padding-right: 14px; }
.carattere { width: 217px; }
.carattere footer, .paragrafo footer, .stili footer { padding-right: 18px; }
.paragrafo { width: 170px; }
.stili { flex: 1; }
.modifica { width: 76px; }
.stack { display: flex; flex-direction: column; justify-content: space-between; align-items: flex-start; padding: 0 0 6px; }
.stack button { height: 18px; gap: 2px; font-size: 10px; }
.modifica .stack { padding-left: 4px; }
.modifica .stack button { font-size: 9px; }
.paste { flex-direction: column; width: 42px; gap: 2px; color: #9aa7bd; font-size: 9px; padding-bottom: 5px; }
.paste .caret { margin: 0; }

.rows { flex-direction: column; padding: 6px 3px 6px 2px; justify-content: space-between; }
.row { display: flex; gap: 3px; }
.box, .joined { display: flex; align-items: center; height: 20px; border: 1px solid #b7c9e1; border-radius: 2px; background: #d2e0f1; flex: none; color: #2b3444; }
.box button { height: 18px; padding: 0 1px; }
.joined { background: #f0f6fd; }
select { appearance: none; border: 0; height: 18px; padding: 0 2px; margin: 0; font: inherit; font-size: 10px; color: #222; background: transparent url("data:image/svg+xml,%3Csvg xmlns='http://www.w3.org/2000/svg' width='4' height='3'%3E%3Cpath d='M0 0h4L2 3z' fill='%234a5f87'/%3E%3C/svg%3E") no-repeat right 2px center; }
.font { width: 99px; }
.size { width: 45px; border-left: 1px solid #b7c9e1; }
.serif { font-family: "Liberation Serif", serif; font-size: 14px; font-weight: bold; }
.box .big { font-size: 17px; }
.box .small { font-size: 12px; }
.thin { font-weight: normal; }
.serif sup, .serif sub { font-size: 7px; line-height: 7px; color: #2d56ae; }
.grow { width: 38px; justify-content: space-around; }
.fmt { width: 154px; justify-content: space-around; padding: 0 1px; }
.colors { width: 53px; justify-content: space-around; }
.fc { font-family: "Liberation Serif", serif; font-size: 14px; font-weight: bold; }
.fc span { width: 15px; line-height: 12px; border-bottom: 3px solid #e00f1c; }
.pilcrow { font-size: 14px; font-weight: bold; width: 16px; }
.lit { background: linear-gradient(#fbd9a0, #f7b75b); }
.box .lit, .box .al { width: 20px; }
.paragrafo .row { justify-content: space-between; gap: 0; }

.stili .body { padding: 3px 2px 7px; gap: 2px; }
.gallery { flex: 1; display: grid; grid-template-columns: repeat(8, minmax(0, 1fr)); }
.gallery button { flex-direction: column; justify-content: space-between; background: #fff; border: 2px solid #d5e5f6; padding: 2px 0 1px; color: #1d2740; font-size: 9px; line-height: 13px; min-width: 0; }
.gallery .sel { border-color: #e9b44c; }
.s { font: 13px/30px Lato, sans-serif; color: #111; height: 30px; }
.s.h { font-size: 17px; color: #365f91; }
.s.h2 { font-size: 15px; color: #4f81bd; }
.s.t { font-size: 27px; line-height: 26px; color: #333; font-weight: 300; }
.s.sub { font-size: 15px; font-style: italic; color: #6c94c4; }
.s.em { font-style: italic; color: #808080; }
.s.emb { font-style: italic; color: #000; }
.galscroll { display: flex; flex-direction: column; width: 12px; }
.galscroll button { flex: 1; background: #e3edf8; border: 1px solid #c6d7ec; }
.galscroll .caret { margin: 0; }
.change { flex-direction: column; width: 40px; font-size: 9px; line-height: 13px; }

.work { flex: 1; display: flex; min-height: 0; background: linear-gradient(#a9c5ec, #8db0e0 50%, #5c86c6); }
.left { flex: 1; min-width: 0; display: flex; flex-direction: column; }
.hruler { display: flex; align-items: center; gap: 4px; height: 22px; padding: 2px 3px; background: #a3c1e9; overflow: hidden; }
.corner { width: 15px; height: 18px; display: grid; place-items: center; background: #dfeafa; border: 1px solid #88a8d6; flex: none; }
.hscale { margin-left: -1px; }
.num { font-size: 9px; fill: #5a6373; text-anchor: middle; }
.docrow { flex: 1; display: flex; }
.vruler { width: 20px; padding-left: 3px; background: #a3c1e9; flex: none; overflow: hidden; }
.vruler svg { background: #fff; overflow: hidden; }
.page { flex: 1; position: relative; margin-right: 31px; padding: 12px 0 17px 31px; background: #fff; box-shadow: 2px 0 2px #4b6ea5; font: 16px/24px "Noto Sans", sans-serif; color: #303030; white-space: nowrap; min-width: 0; }
.page p + p { margin-top: 17px; }
.page ul { list-style: none; margin: 16px 0; padding-left: 74px; line-height: 26px; }
.page li::before { content: ""; float: left; width: 7px; height: 7px; margin: 10px 0 0 -37px; border-radius: 50%; background: #000; }
.page mark { background: #9ac9ec; color: #17406c; padding-bottom: 17px; }
.page u { text-decoration: underline solid #e08a8a 1px; text-underline-offset: 3px; text-decoration-skip-ink: none; }
.ibeam { position: absolute; left: 427px; top: 209px; }

.hscroll { display: flex; height: 15px; background: #7896bf; margin-right: 1px; border-top: 1px solid #8a9db8; }
.hscroll button { width: 16px; }
.track { flex: 1; padding-left: 108px; }
.thumb { height: 13px; background: linear-gradient(#e3e8ee, #c3ccd8); display: grid; place-items: center; }
.thumb i, .vthumb i { width: 4px; height: 4px; background: #a2adbb; border-radius: 1px; }
.tri { border: 4px solid transparent; width: 0; height: 0; }
.tri.l { border-right-color: #3e5a88; border-left: 0; }
.tri.r { border-left-color: #3e5a88; border-right: 0; }
.tri.u { border-bottom-color: #3e5a88; border-top: 0; }
.tri.d { border-top-color: #3e5a88; border-bottom: 0; }
.vscroll { width: 16px; display: flex; flex-direction: column; align-items: center; padding-top: 3px; background: #a9c7f0; }
.split { width: 8px; height: 2px; background: #23344f; }
.rulerbtn { height: 17px; }
.vtrack { flex: 1; width: 14px; display: flex; flex-direction: column; align-items: center; padding: 5px 0 2px; background: #7c9bc7; }
.vthumb { margin-top: 38px; width: 13px; height: 47px; background: linear-gradient(90deg, #f3f5f8, #ccd4de); border: 1px solid #96a8c2; display: grid; place-items: center; }
.tri.d { margin-top: auto; }
.browse { display: flex; flex-direction: column; gap: 8px; padding: 7px 0 20px; }

.status { display: flex; align-items: stretch; height: 22px; background: linear-gradient(#dceafc, #bbd3f3 35%, #cfe1fa); font-size: 10px; border-top: 1px solid #eaf2fd; }
.status span { display: flex; align-items: center; padding: 0 5px; border-right: 1px solid #b2cbed; white-space: nowrap; }
.views { margin-left: auto; display: flex; align-items: center; padding: 0 1px 0 6px; border-left: 1px solid #86a5d1; background: #bdd2ef; }
.views button { width: 17px; height: 17px; }
.zoom { display: flex; align-items: center; background: linear-gradient(#b5cdef, #87a9da); padding: 0 3px 0 7px; }
.zoom button:first-child { width: 24px; margin-right: 7px; }
.zoom input { appearance: none; width: 95px; height: 14px; margin: 0; background: linear-gradient(#e2ebf8, #e2ebf8) center / 100% 1px no-repeat; }
.zoom input::-webkit-slider-thumb { appearance: none; width: 7px; height: 12px; background: #e4ecf7; border: 1px solid #6580ab; border-radius: 1px 1px 3px 3px; }

.taskbar { display: flex; height: 37px; background: #ecdfdc; color: #222; }
.start { width: 46px; }
.search { flex: 0 1 324px; display: flex; align-items: center; gap: 8px; padding-left: 10px; background: #fff; border: 1px solid #d6cbc9; border-bottom: 0; }
.search input { flex: 1; min-width: 0; border: 0; padding: 0; font: 14px/20px "Open Sans", sans-serif; background: transparent; }
.search input::placeholder { color: #555; opacity: 1; }
.apps { display: flex; }
.apps button { width: 38px; }
.apps .tv { width: 47px; }
.apps .run { background: linear-gradient(#1670b8, #1670b8) center bottom / 30px 2px no-repeat; }
.apps .active { background: linear-gradient(#1670b8, #1670b8) center bottom / 34px 2px no-repeat, linear-gradient(#f8f4f4, #f8f4f4) center / 34px 100% no-repeat; }
.tray { display: flex; margin-left: auto; }
.tray button { width: 23px; }
.clock { width: 70px; display: flex; flex-direction: column; justify-content: center; align-items: center; font-size: 11px; line-height: 17px; }
.note { width: 48px; margin-right: 3px; padding-right: 8px; border-right: 1px solid #cdbfbd; }
```
